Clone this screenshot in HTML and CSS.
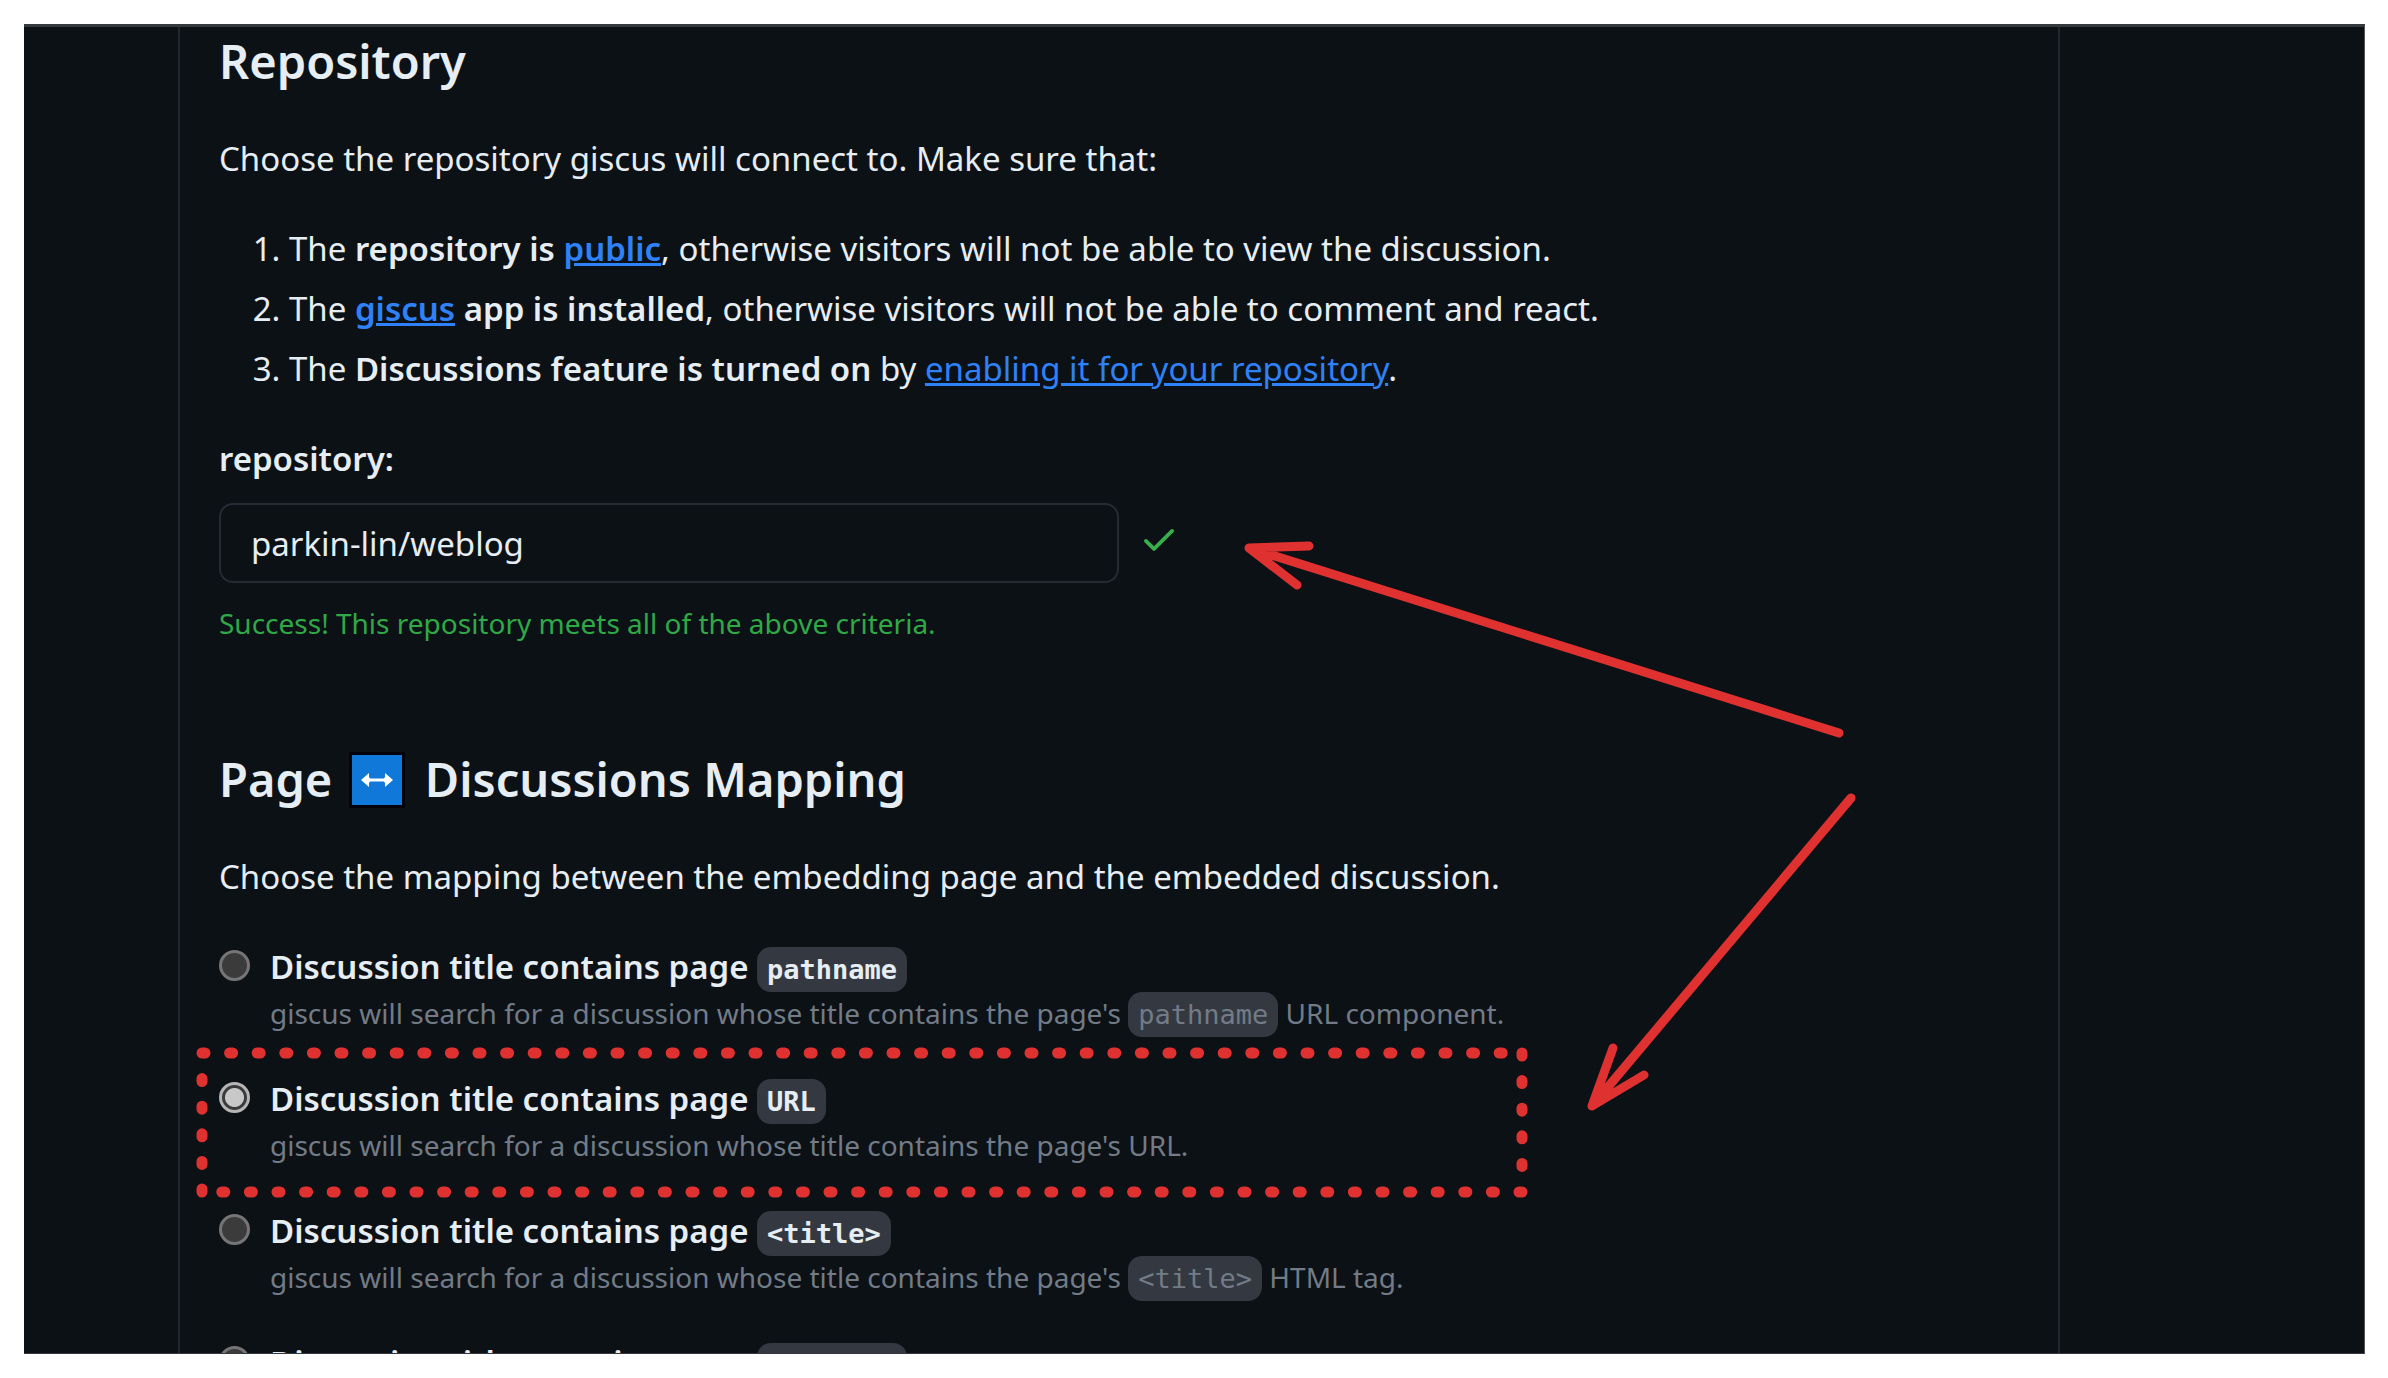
FILE: index.html
```html
<!DOCTYPE html>
<html lang="en">

<head>
    <meta charset="UTF-8">
    <meta name="viewport" content="width=device-width, initial-scale=1.0">
    <title>giscus</title>
    <link rel="stylesheet" href="styles.css">
</head>

<body>
    <div class="frame">
        <main class="column">
            <section class="section">
                <h2>Repository</h2>
                <p>Choose the repository giscus will connect to. Make sure that:</p>
                <ol class="criteria">
                    <li>The <strong>repository is <a href="#public">public</a></strong>, otherwise visitors will not be able to view the discussion.</li>
                    <li>The <strong><a href="#app">giscus</a> app is installed</strong>, otherwise visitors will not be able to comment and react.</li>
                    <li>The <strong>Discussions feature is turned on</strong> by <a href="#enable">enabling it for your repository</a>.</li>
                </ol>
                <label class="field-label" for="repository">repository:</label>
                <div class="field">
                    <input class="text-input" type="text" id="repository" value="parkin-lin/weblog">
                    <svg class="check" viewBox="0 0 16 16" aria-hidden="true">
                        <path d="M13.78 4.22a.75.75 0 0 1 0 1.06l-7.25 7.25a.75.75 0 0 1-1.06 0L2.22 9.28a.751.751 0 0 1 .018-1.042.751.751 0 0 1 1.042-.018L6 10.94l6.72-6.72a.75.75 0 0 1 1.06 0Z" />
                    </svg>
                </div>
                <p class="success">Success! This repository meets all of the above criteria.</p>
            </section>

            <section class="section">
                <h2>Page
                    <svg class="emoji" viewBox="0 0 56 56" role="img" aria-label="to">
                        <rect width="56" height="56" fill="#02040a" />
                        <rect x="3" y="3" width="50" height="50" fill="#0f78d8" />
                        <path d="M18 28h20" stroke="#fff" stroke-width="3" />
                        <path d="M12 28l8-7v4l2 3-2 3v4zM44 28l-8-7v4l-2 3 2 3v4z" fill="#fff" />
                    </svg>
                    Discussions Mapping</h2>
                <p>Choose the mapping between the embedding page and the embedded discussion.</p>
                <div class="options">
                    <div class="option">
                        <input type="radio" name="mapping" id="pathname">
                        <div>
                            <label for="pathname">Discussion title contains page <code>pathname</code></label>
                            <p class="note">giscus will search for a discussion whose title contains the page's <code>pathname</code> URL component.</p>
                        </div>
                    </div>
                    <div class="option">
                        <input type="radio" name="mapping" id="url" checked>
                        <div>
                            <label for="url">Discussion title contains page <code>URL</code></label>
                            <p class="note">giscus will search for a discussion whose title contains the page's URL.</p>
                        </div>
                    </div>
                    <div class="option">
                        <input type="radio" name="mapping" id="title">
                        <div>
                            <label for="title">Discussion title contains page <code>&lt;title&gt;</code></label>
                            <p class="note">giscus will search for a discussion whose title contains the page's <code>&lt;title&gt;</code> HTML tag.</p>
                        </div>
                    </div>
                    <div class="option">
                        <input type="radio" name="mapping" id="og-title">
                        <div>
                            <label for="og-title">Discussion title contains page <code>og:title</code></label>
                        </div>
                    </div>
                </div>
            </section>
        </main>

        <svg class="marks" aria-hidden="true">
            <g class="arrow">
                <path d="M1815 709L1225 524M1285 522L1225 524L1273 561" />
                <path d="M1827 774L1568 1082M1589 1024L1568 1082L1620 1051" />
            </g>
            <g class="dots">
                <path d="M178 1029H1480" />
                <path d="M1498 1029V1146" />
                <path d="M1498 1168H196" />
                <path d="M178 1168V1050" />
            </g>
        </svg>
    </div>
</body>

</html>
```
FILE: styles.css
```css
* {
    box-sizing: border-box;
}

body {
    margin: 0;
    height: 100vh;
    padding: 24px 23px 24px 24px;
    background-color: #ffffff;
    color: #e6edf3;
    font-family: "Segoe UI", "Noto Sans", sans-serif;
    font-size: 33px;
    line-height: 52px;
}

.frame {
    position: relative;
    height: 100%;
    overflow: hidden;
    background-color: #0c1116;
    border-top: 3px solid #36393c;
    border-right: 1px solid #55585b;
    border-bottom: 1px solid #36393c;
}

.column {
    margin: 0 304px 0 154px;
    padding: 0 39px;
    border-left: 2px solid #20252e;
    border-right: 2px solid #20252e;
}

.section {
    margin-bottom: 100px;
}

h2 {
    margin: 0 0 38px;
    font-size: 47px;
    font-weight: 600;
    line-height: 68px;
}

p {
    margin: 0 0 38px;
}

strong {
    font-weight: 600;
}

a {
    color: #2f81f7;
    text-decoration: underline;
}

.criteria {
    margin: 0 0 38px;
    padding-left: 70px;
}

.criteria li {
    margin-bottom: 8px;
}

.field-label {
    display: block;
    margin-bottom: 18px;
    font-weight: 600;
}

.field {
    display: flex;
    align-items: center;
    gap: 20px;
}

.text-input {
    width: 900px;
    height: 80px;
    padding: 0 30px;
    border: 2px solid #252a33;
    border-radius: 14px;
    background-color: #0c1116;
    color: inherit;
    font: inherit;
}

.check {
    width: 40px;
    height: 40px;
    margin-bottom: 8px;
    fill: #37af4b;
}

.success {
    margin: 18px 0 0;
    color: #30a846;
    font-size: 28px;
    line-height: 44px;
}

.emoji {
    width: 56px;
    height: 56px;
    margin: 0 8px 0 4px;
    vertical-align: -11px;
}

.options {
    margin-top: 40px;
}

.option {
    display: flex;
    gap: 20px;
    margin-bottom: 40px;
}

.option input {
    appearance: none;
    flex: none;
    width: 31px;
    height: 31px;
    margin: 7px 0 0;
    border: 3px solid #757575;
    border-radius: 50%;
    background-color: #3b3b3b;
}

.option input:checked {
    border-color: #b5b5b5;
    background: radial-gradient(circle, #c8c8c8 9px, #3b3b3b 10px);
}

.option label {
    display: block;
    font-weight: 600;
    line-height: 48px;
}

.note {
    margin: 0;
    color: #727b86;
    font-size: 28px;
    line-height: 44px;
}

code {
    padding: 7px 10px;
    border-radius: 14px;
    background-color: #343941;
    font-family: Consolas, "DejaVu Sans Mono", monospace;
    font-size: 27px;
    line-height: 1;
}

/* arrows and dotted box drawn over the page */
.marks {
    position: absolute;
    top: -3px;
    left: 0;
    width: 100%;
    height: 100%;
    pointer-events: none;
}

.marks path {
    fill: none;
    stroke: #e03131;
    stroke-linecap: round;
    stroke-linejoin: round;
}

.arrow path {
    stroke-width: 9px;
}

.dots path {
    stroke-width: 11px;
    stroke-dasharray: 3 24.6;
}
```
